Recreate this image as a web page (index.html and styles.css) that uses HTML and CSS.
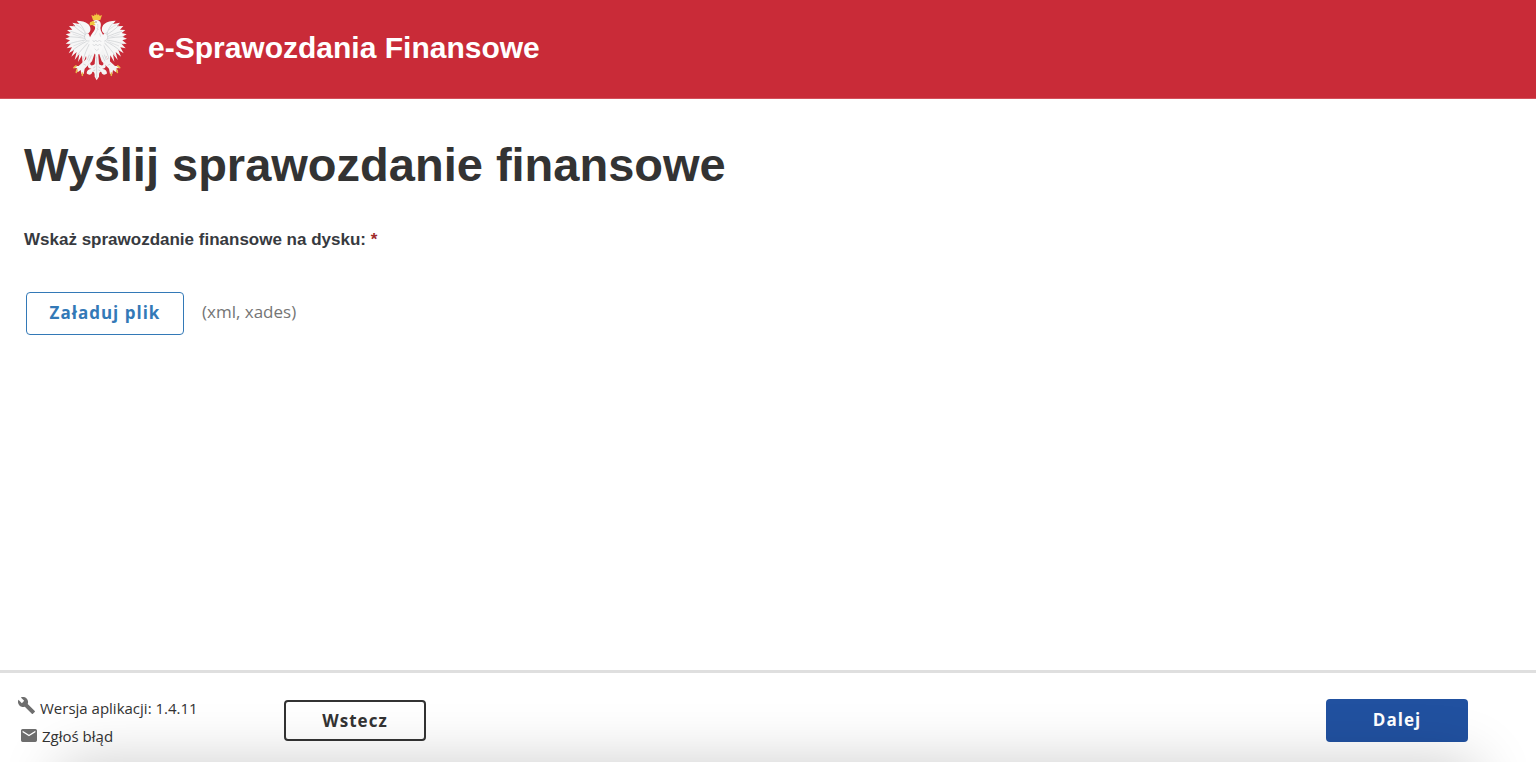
FILE: index.html
```html
<!DOCTYPE html>
<html lang="pl">
<head>
  <meta charset="UTF-8">
  <meta name="viewport" content="width=device-width, initial-scale=1.0">
  <title>e-Sprawozdania Finansowe</title>
  <link rel="stylesheet" href="styles.css">
</head>
<body>
  <header class="header">
    <svg class="emblem" viewBox="0 0 240 252" aria-hidden="true">
      <!-- wings -->
      <g id="wing">
        <path fill="#f7f7f7" d="M108 112C102 104 101 92 96 88C106 84 106 68 96 60C88 53 76 50 62 50L70 60L49 56L58 67L39 66L49 77L33 78L44 87L29 91L42 98L28 104L42 109L29 119L44 120L32 133L48 130L38 148L54 138L46 158L62 144L56 168L70 150L66 174L78 154L80 182L90 156L94 176L104 146L112 150Z"/>
        <path fill="none" stroke="#c9cbce" stroke-width="2" d="M89 93C80 86 66 78 52 64M87 98C74 92 58 86 43 82M87 103C72 100 55 99 38 98M89 108C74 110 56 114 38 120M92 112C76 120 60 130 48 141M96 116C84 128 72 142 63 156M100 120C92 136 86 150 82 166M88 91C86 80 80 68 70 57M96 88C86 88 83 96 88 106C92 112 98 112 104 110"/>
        <path fill="none" stroke="#e2e3e5" stroke-width="3" d="M60 62C72 68 84 78 91 88M50 90L80 100M52 126L84 113M74 140L94 120"/>
      </g>
      <use href="#wing" transform="matrix(-1 0 0 1 241 0)"/>
      <!-- legs and talons -->
      <g id="leg">
        <path fill="#f4f4f4" d="M106 132L90 166L68 186L57 186L55 192L64 193L60 200L66 204L74 198L76 210L83 210L86 194L108 172L118 142Z"/>
        <path fill="none" stroke="#c9cbce" stroke-width="2" d="M100 152L94 168M106 154L98 172M82 180L90 184"/>
        <path fill="none" stroke="#e8b84a" stroke-width="5" stroke-linecap="round" d="M60 186L54 191M63 198L61 205M79 207L79 214"/>
      </g>
      <use href="#leg" transform="matrix(-1 0 0 1 245 0)"/>
      <!-- tail -->
      <path fill="#f5f5f5" d="M119 142L126 142L129 180C137 188 144 184 142 176C153 182 151 195 138 194C146 195 152 198 153 208C146 216 138 212 136 204C133 202 130 204 129 212L129 218L122 229L116 218L116 212C115 204 112 202 109 204C107 212 99 216 92 208C93 198 99 195 107 194C94 195 92 182 103 176C101 184 108 188 116 180Z"/>
      <path fill="none" stroke="#c4c6c9" stroke-width="2" d="M122 158V222M112 192L118 188M133 192L127 188M112 200L118 198M133 200L127 198"/>
      <!-- body and head -->
      <path fill="#f8f8f8" d="M108 55C110 49 118 46 126 49C135 52 136 62 133 72C133 82 142 90 144 100C147 122 140 144 124 154C106 146 98 126 101 105C103 92 114 84 117 75C119 68 115 64 108 62Z"/>
      <path fill="none" stroke="#d0d2d5" stroke-width="2" d="M125 60C128 76 121 84 115 94M131 88L134 98M110 108L114 114L119 108L124 114L130 108L136 114M110 120L115 126L120 120L125 126L131 120L136 126M116 134L122 140L129 134M122 72L128 78"/>
      <path fill="#f0c63e" d="M113 51L103 54C99 59 101 66 105 64C110 61 114 65 119 63C116 59 110 58 118 57Z"/>
      <circle cx="120" cy="54" r="2" fill="#83705a"/>
      <!-- crown -->
      <path fill="#f3c441" d="M111 48L106 33L114 36L116 31L120 34L122 27L125 34L129 31L131 36L138 33L133 48Z"/>
    </svg>
    <span class="app-name">e-Sprawozdania Finansowe</span>
  </header>

  <main class="content">
    <h1>Wyślij sprawozdanie finansowe</h1>
    <p class="field-label" id="file-label">Wskaż sprawozdanie finansowe na dysku: <span class="required">*</span></p>
    <div class="upload">
      <button type="button" class="btn btn-upload" aria-describedby="file-label">Załaduj plik</button>
      <span class="formats">(xml, xades)</span>
    </div>
  </main>

  <footer class="footer">
    <div class="app-info">
      <div class="info-row">
        <svg class="icon-wrench" viewBox="1 1 22 22" aria-hidden="true"><path d="M22.7 19l-9.1-9.1c.9-2.3.4-5-1.5-6.9-2-2-5-2.400-7.400-1.300L9 6 6 9 1.600 4.700C.4 7.100.9 10.100 2.900 12.100c1.900 1.900 4.600 2.400 6.900 1.500l9.100 9.100c.4.4 1 .4 1.400 0l2.300-2.300c.5-.4.5-1.100.1-1.400z"/></svg>
        <span>Wersja aplikacji: 1.4.11</span>
      </div>
      <a href="#" class="info-row info-mail">
        <svg class="icon-mail" viewBox="2 4 20 16" aria-hidden="true"><path d="M20 4H4c-1.100 0-2 .9-2 2v12c0 1.100.9 2 2 2h16c1.100 0 2-.9 2-2V6c0-1.100-.9-2-2-2zm0 4l-8 5-8-5V6l8 5 8-5v2z"/></svg>
        <span>Zgłoś błąd</span>
      </a>
    </div>
    <button type="button" class="btn btn-back">Wstecz</button>
    <button type="button" class="btn btn-next">Dalej</button>
  </footer>
</body>
</html>
```
FILE: styles.css
```css
* {
  box-sizing: border-box;
}
body {
  margin: 0;
  min-height: 100vh;
  display: flex;
  flex-direction: column;
  background: #fff;
  color: #333;
  font-family: "Open Sans", sans-serif;
}

/* header */
.header {
  display: flex;
  align-items: center;
  gap: 12px;
  padding: 4px 56px 10px;
  background: #c92b38;
  border-bottom: 1px solid #d3505b;
}
.emblem {
  width: 80px;
  height: 84px;
}
.app-name {
  padding-top: 3px;
  color: #fff;
  font-family: "Liberation Sans", Arial, sans-serif;
  font-size: 30px;
  font-weight: bold;
}

/* content */
.content {
  flex: 1;
  padding: 36px 24px;
}
h1 {
  margin: 0;
  font-family: "Liberation Sans", Arial, sans-serif;
  font-size: 47px;
  line-height: 60px;
}
.field-label {
  margin: 33px 0 40px;
  color: #373a40;
  font-family: "Liberation Sans", Arial, sans-serif;
  font-size: 17px;
  font-weight: bold;
  line-height: 24px;
}
.required {
  color: #a02c2c;
}
.upload {
  display: flex;
  align-items: center;
  gap: 18px;
  padding-left: 2px;
}
.formats {
  padding-bottom: 4px;
  color: #757575;
  font-size: 17px;
}

/* buttons */
.btn {
  height: 43px;
  padding: 0 0 2px;
  border-radius: 4px;
  font-family: "Open Sans", sans-serif;
  font-size: 17px;
  font-weight: bold;
  letter-spacing: 1px;
  cursor: pointer;
}
.btn-upload {
  width: 158px;
  background: #fff;
  border: 1px solid #3379b7;
  color: #3379b7;
}
.btn-back {
  width: 142px;
  height: 41px;
  padding: 0;
  background: transparent;
  border: 2px solid #333;
  color: #333;
}
.btn-next {
  width: 142px;
  margin-left: auto;
  background: #2151a0;
  border: 0;
  color: #fff;
}

/* footer */
.footer {
  position: relative;
  display: flex;
  align-items: center;
  height: 92px;
  padding: 6px 68px 0 18px;
  border-top: 3px solid #dfdfdf;
  overflow: hidden;
}
.footer::after {
  content: "";
  position: absolute;
  top: 100%;
  left: 60px;
  right: 60px;
  height: 80px;
  box-shadow: 0 0 60px rgba(0, 0, 0, 0.2);
  pointer-events: none;
}
.app-info {
  width: 266px;
  padding-top: 2px;
  font-size: 15px;
  line-height: 28px;
}
.info-row {
  display: flex;
  align-items: center;
  gap: 5px;
  color: #333;
  text-decoration: none;
}
.info-mail {
  padding-left: 3px;
}
.icon-wrench {
  width: 17px;
  height: 17px;
  margin-bottom: 5px;
  fill: #6e6e6e;
}
.icon-mail {
  width: 16px;
  height: 13px;
  fill: #6e6e6e;
}
```
